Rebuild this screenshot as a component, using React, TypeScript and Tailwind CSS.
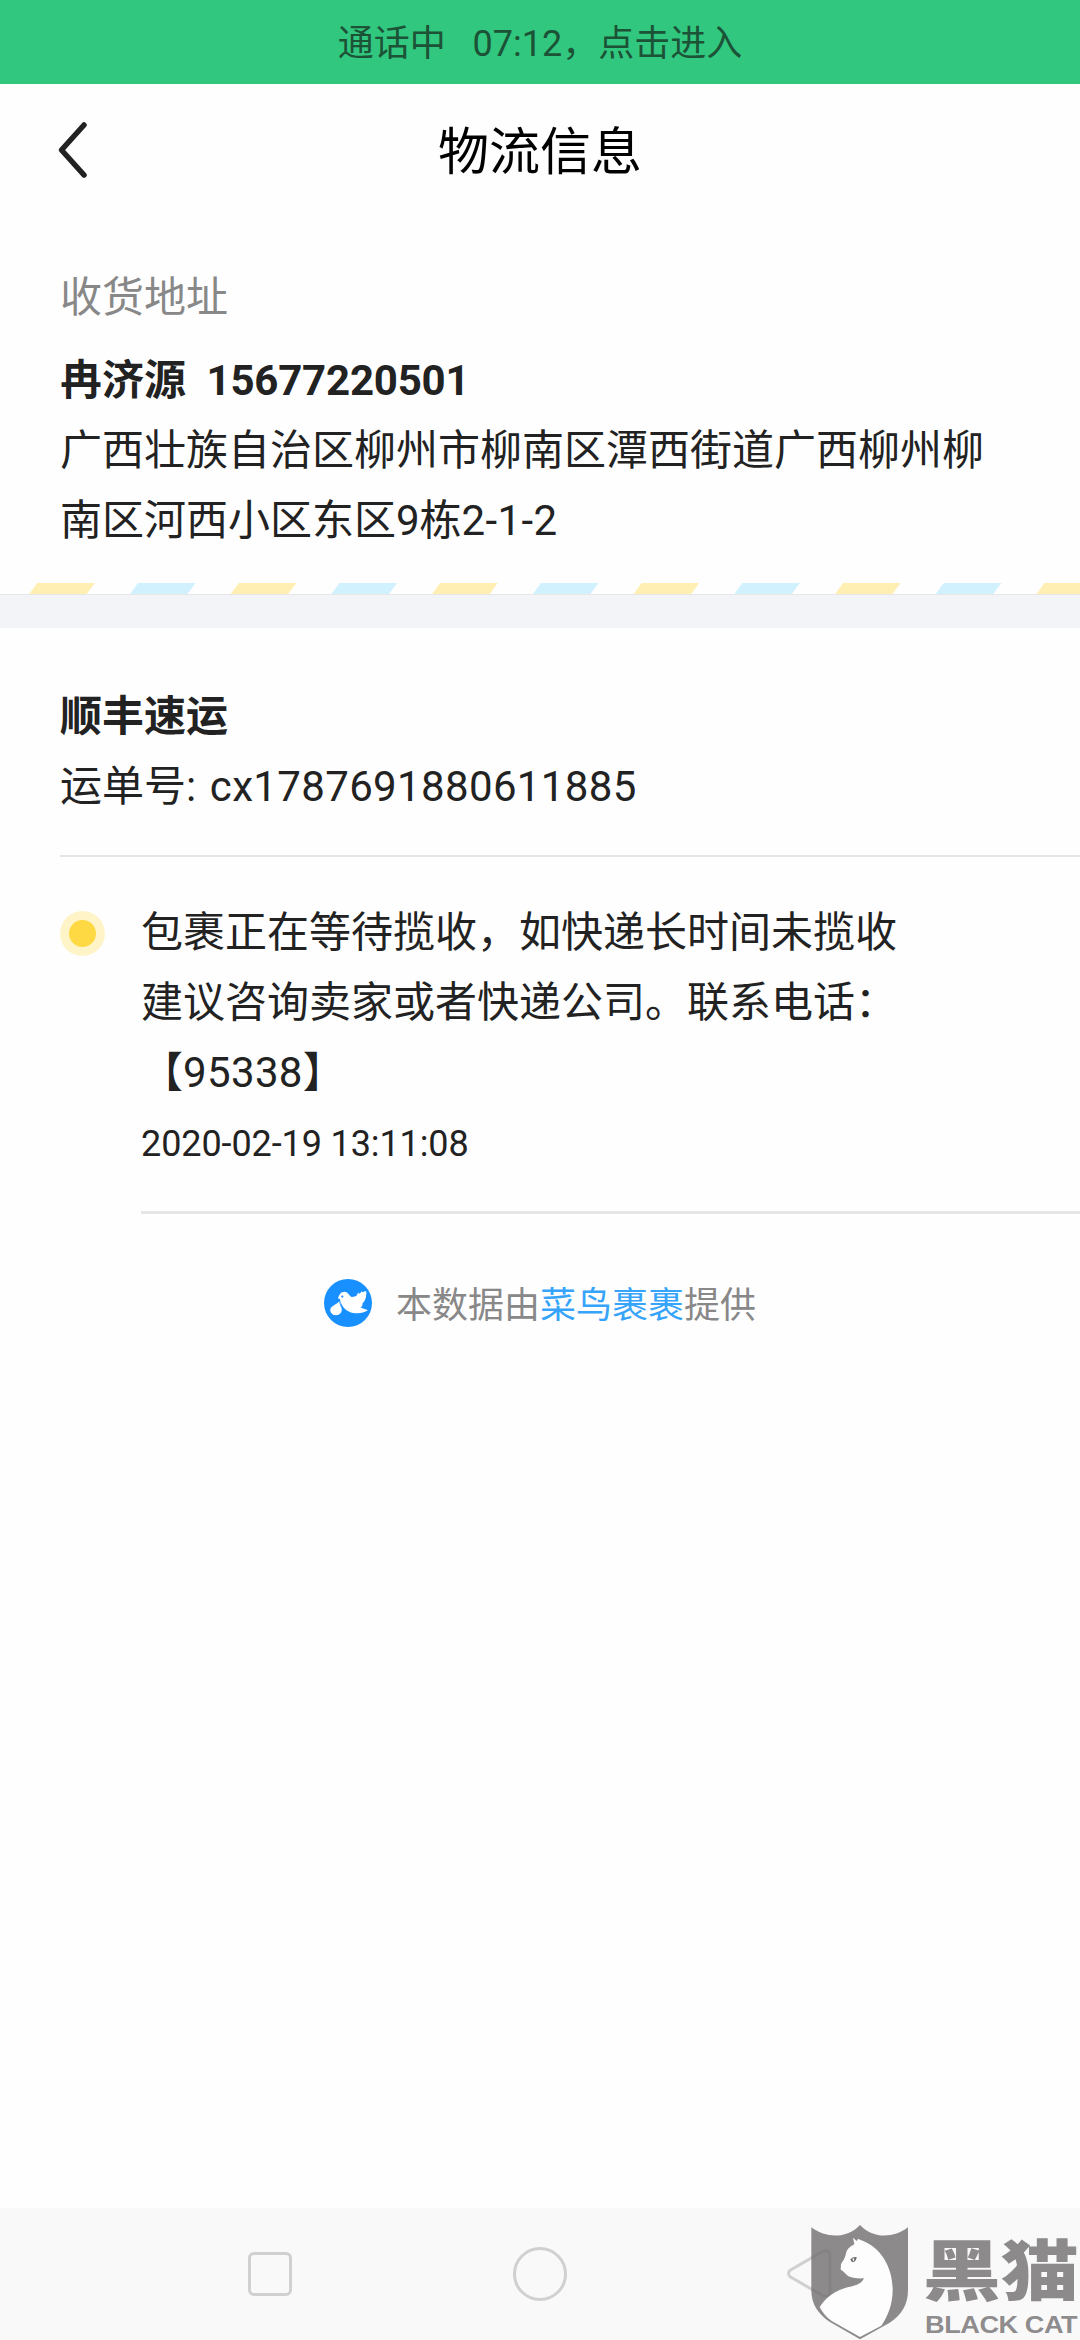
const stripes = Array.from({ length: 11 }, (_, i) => ({
  x: 29.3 + i * 100.72,
  color: i % 2 === 0 ? "#ffefb2" : "#d2f1ff",
}));

function StatusBar() {
  return (
    <div className="flex h-[84px] items-center justify-center bg-[#31c77f] pt-[3px] text-[36px] text-[#1c5236]">
      <span className="whitespace-pre">通话中{"   "}07:12，点击进入</span>
    </div>
  );
}

function Header() {
  return (
    <header className="grid h-[132px] grid-cols-[120px_1fr_120px] items-center">
      <button type="button" aria-label="返回" className="pl-[56px]">
        <svg width="34" height="60" viewBox="0 0 34 60" fill="none">
          <path
            d="M28 5 5.500 30 28 55"
            stroke="#222"
            strokeWidth="5.500"
            strokeLinecap="round"
            strokeLinejoin="round"
          />
        </svg>
      </button>
      <h1 className="pt-[4px] text-center text-[51px] leading-none text-black">物流信息</h1>
    </header>
  );
}

function Address() {
  return (
    <section className="h-[367px] pl-[60px] pt-[47px] text-[42px] leading-[70px]">
      <p className="text-[#888]">收货地址</p>
      <p className="mt-[13px] whitespace-pre font-bold">
        冉济源<span className="tracking-[-0.2px]">{"  "}15677220501</span>
      </p>
      <p>
        广西壮族自治区柳州市柳南区潭西街道广西柳州柳
        <br />
        南区河西小区东区9栋<span className="tracking-[0.35px]">2-1-2</span>
      </p>
    </section>
  );
}

function Divider() {
  return (
    <div>
      <svg className="block" width="1080" height="11" viewBox="0 0 1080 11">
        {stripes.map((s) => (
          <path key={s.x} d={`M${s.x} 11l8-11h57.500l-8 11z`} fill={s.color} />
        ))}
      </svg>
      <div className="h-[34px] border-t border-[#e7e7e7] bg-[#f3f4f8]" />
    </div>
  );
}

function Shipment() {
  return (
    <section className="pl-[60px] pt-[54px] text-[42px] leading-[70px]">
      <div className="h-[175px] border-b-2 border-[#e6e6e6]">
        <h2 className="font-bold">顺丰速运</h2>
        <p>
          运单号<span className="tracking-[1.6px]">: </span>
          <span className="tracking-[0.35px]">cx1787691880611885</span>
        </p>
      </div>
      <div className="flex">
        <span className="mt-[54px] grid size-[45px] shrink-0 place-items-center rounded-full bg-[#fff4c7]">
          <span className="size-[27px] rounded-full bg-[#ffd944]" />
        </span>
        <div className="ml-9 h-[357px] flex-1 border-b-[3px] border-[#e6e6e6] pt-[41px]">
          <p>
            包裹正在等待揽收，如快递长时间未揽收
            <br />
            建议咨询卖家或者快递公司。联系电话：
            <br />
            【<span className="tracking-[0.35px]">95338</span>】
          </p>
          <p className="pt-px text-[36px] tracking-[-0.1px]">2020-02-19 13:11:08</p>
        </div>
      </div>
    </section>
  );
}

function Provider() {
  return (
    <div className="mt-[65px] flex h-12 items-center justify-center gap-6 text-[36px] text-[#888]">
      <svg width="48" height="48" viewBox="0 0 48 48">
        <circle cx="24" cy="24" r="24" fill="#1990ff" />
        <g fill="#fff">
          <path d="M14 19.500c1-4 3-6.800 6.300-6.800 3.600 0 4.700 3.600 7.200 5.300 3.500-.2 5.800-1.600 8-3.600 2.500-1 4.500-1.700 6.700-2.400.6 5-.6 9.200-3.700 12.600.2 1.900-.6 3.100-2 4l7.500 2.700c-4 2.500-8 3.300-12.500 2.900-6.500-.5-11.500-3.900-14-9.300-.9-1.700-1.500-3.500-1.500-5z" />
          <path d="M32.500 16.500c.8-1 1.200-2 1.700-3.200l1 2.200c1.100-1 2.100-2.200 2.800-3.500l.7 2.500-3 3z" />
          <path d="M16.500 21.500c.2 3.800 1.300 6.500 1.300 9.300a5.800 5.300 0 0 1-11.600.4c0-3.800 4.600-4.600 10.300-9.700z" />
        </g>
        <path d="M15.600 21c.3 3.800 1 6 3 8.500" stroke="#1990ff" strokeWidth="1" fill="none" />
        <circle cx="18.300" cy="17.600" r="1.100" fill="#1990ff" />
      </svg>
      <p className="pt-[5px]">
        本数据由<span className="text-[#36a4fb]">菜鸟裹裹</span>提供
      </p>
    </div>
  );
}

function SystemNav() {
  return (
    <nav className="mt-auto grid h-[132px] grid-cols-3 place-items-center bg-[#f9f9f9] px-[135px]">
      <span className="size-[44px] rounded-md border-[3px] border-[#d0d0d0]" />
      <span className="size-[54px] rounded-full border-[3px] border-[#d0d0d0]" />
      <svg width="46" height="54" viewBox="0 0 46 54" fill="none">
        <path
          d="M3.500 23 35.500 4.600Q42.500 2 43 8v37q-.5 6-7.500 3.400L3.500 30q-4-3.500 0-7z"
          stroke="#d0d0d0"
          strokeWidth="3"
          strokeLinejoin="round"
        />
      </svg>
    </nav>
  );
}

function Watermark() {
  return (
    <svg
      className="absolute bottom-0 right-0"
      width="300"
      height="140"
      viewBox="0 0 900 420"
      fill="#716e6f"
      fillOpacity="0.8"
    >
      <path d="M94 82c45 34 108 34 146-7 38 41 100 41 144 7v188c0 45-20 75-55 98l-89 50-90-52c-36-24-56-54-56-96z" />
      <path
        d="M219 113l11 10 5-7 5 3c65 22 98 85 98 151 0 42-14 78-34 107l-64 34-85-48c-18-13-28-27-36-42 25-40 62-55 100-63 18-4 28-12 33-23-20 1-38-1-48-7-8-7-12-14-22-19l1-17c5-9 11-15 14-28 3-16 12-24 26-31z"
        fill="#fdfdfd"
        fillOpacity="1"
      />
      <path d="M211 178q8-9 19-7-1 13-11 16-7-2-8-9" fillOpacity="1" />
      <path d="M220 173q-5 6 1 11 4-6-1-11" fill="#fdfdfd" fillOpacity="1" />
      <g transform="translate(428 0) scale(1.020 .86)">
        <text
          y="332"
          fontSize="230"
          fontWeight="900"
          className="font-['Noto_Sans_CJK_SC',sans-serif]"
        >
          黑猫
        </text>
      </g>
      <g transform="translate(435 398) scale(1.180 1)">
        <text
          fontSize="69"
          fontWeight="700"
          textLength="388"
          className="font-['Liberation_Sans',sans-serif]"
        >
          BLACK CAT
        </text>
      </g>
    </svg>
  );
}

export default function App() {
  return (
    <div className="relative flex h-[2340px] w-[1080px] flex-col overflow-hidden bg-[#fefefe] font-['Roboto','Noto_Sans_CJK_SC',sans-serif] text-[#222]">
      <StatusBar />
      <Header />
      <Address />
      <Divider />
      <Shipment />
      <Provider />
      <SystemNav />
      <Watermark />
    </div>
  );
}
